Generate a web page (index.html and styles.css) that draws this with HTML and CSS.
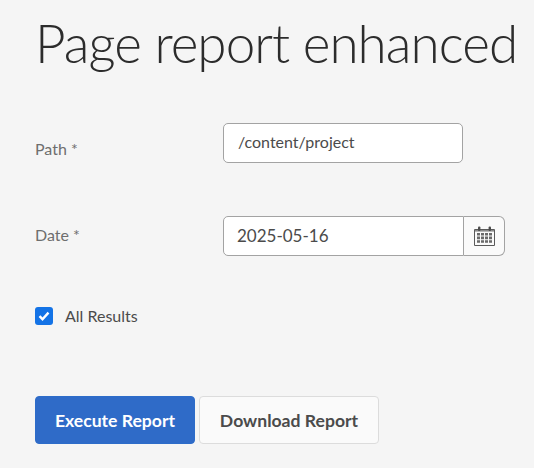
FILE: index.html
```html
<!DOCTYPE html>
<html lang="en">
<head>
    <meta charset="UTF-8">
    <meta name="viewport" content="width=device-width, initial-scale=1.0">
    <title>Page report enhanced</title>
    <link rel="stylesheet" href="styles.css">
</head>
<body>
    <h1 class="title">Page report enhanced</h1>
    <form class="report-form">
        <div class="row row-path">
            <label class="label" for="path">Path *</label>
            <input class="input input-path" id="path" type="text" value="/content/project">
        </div>
        <div class="row row-date">
            <label class="label" for="date">Date *</label>
            <div class="datepicker">
                <input class="input input-date" id="date" type="text" value="2025-05-16">
                <button class="calendar-button" type="button" aria-label="Calendar">
                    <svg width="21" height="21" viewBox="0 0 21 21">
                        <path d="M.5 3.5h20v16H.5z" fill="none" stroke="#5a5a5a"/>
                        <path d="M1 4h19v1.6H1z" fill="#8a8a8a"/>
                        <rect x="4" y="0.5" width="2.4" height="4.5" rx="1" fill="#4b4b4b"/>
                        <rect x="14.6" y="0.5" width="2.4" height="4.5" rx="1" fill="#4b4b4b"/>
                        <path d="M3 7h3v2.6H3zM7 7h3v2.6H7zM11 7h3v2.6h-3zM15 7h3v2.6h-3zM3 10.6h3v2.6H3zM7 10.6h3v2.6H7zM11 10.6h3v2.6h-3zM15 10.6h3v2.6h-3zM3 14.2h3v2.6H3zM7 14.2h3v2.6H7zM11 14.2h3v2.6h-3zM15 14.2h3v2.6h-3z" fill="#6a6a6a"/>
                    </svg>
                </button>
            </div>
        </div>
        <label class="checkbox-row">
            <span class="checkbox">
                <svg width="12" height="10" viewBox="0 0 12 10">
                    <path d="M1.5 5.2l3 3L10.5 1.6" fill="none" stroke="#fff" stroke-width="2.4"/>
                </svg>
            </span>
            <span class="checkbox-label">All Results</span>
        </label>
        <div class="actions">
            <button class="btn btn-primary" type="button">Execute Report</button>
            <button class="btn btn-secondary" type="button">Download Report</button>
        </div>
    </form>
</body>
</html>
```

FILE: styles.css
```css
body {
    margin: 0;
    padding: 0 0 0 35px;
    background-color: #f5f5f5;
    font-family: Lato, "Noto Sans", sans-serif;
    color: #4b4b4b;
    overflow: hidden;
}
.title {
    margin: 0;
    padding-top: 6px;
    height: 74px;
    font-size: 53px;
    line-height: 74px;
    font-weight: 300;
    letter-spacing: -0.95px;
    color: #2c2c2c;
    white-space: nowrap;
}
.report-form {
    display: flex;
    flex-direction: column;
}
.row {
    display: flex;
    align-items: center;
}
.row-path {
    margin-top: 43px;
}
.row-date {
    margin-top: 53px;
}
.label {
    width: 188px;
    font-size: 16px;
    color: #6e6e6e;
    position: relative;
    top: 5px;
}
.row-date .label {
    top: -2px;
}
.input {
    height: 40px;
    box-sizing: border-box;
    border: 1px solid #a3a3a3;
    border-radius: 5px;
    background-color: #fff;
    font-family: inherit;
    font-size: 16px;
    color: #4b4b4b;
    outline: none;
}
.input-path {
    width: 240px;
    padding: 0 14px 4px;
}
.datepicker {
    display: flex;
}
.input-date {
    width: 241px;
    padding: 0 13px 2px;
    border-radius: 5px 0 0 5px;
    font-size: 17px;
}
.calendar-button {
    width: 41px;
    height: 40px;
    padding: 0;
    box-sizing: border-box;
    display: flex;
    align-items: center;
    justify-content: center;
    border: 1px solid #a3a3a3;
    border-left: 0;
    border-radius: 0 6px 6px 0;
    background-color: #fafafa;
}
.checkbox-row {
    display: flex;
    align-items: center;
    margin-top: 50px;
}
.checkbox {
    width: 18px;
    height: 18px;
    border-radius: 3px;
    background-color: #1473e6;
    display: flex;
    align-items: center;
    justify-content: center;
}
.checkbox-label {
    margin-left: 12px;
    font-size: 16px;
}
.actions {
    display: flex;
    gap: 4px;
    margin-top: 71px;
}
.btn {
    height: 48px;
    box-sizing: border-box;
    border-radius: 4px;
    font-family: inherit;
    font-size: 17.6px;
    font-weight: 700;
}
.btn-primary {
    width: 160px;
    border: 1px solid #2d6cc9;
    background-color: #2f6bc8;
    color: #fff;
}
.btn-secondary {
    width: 180px;
    border: 1px solid #dcdcdc;
    background-color: #fafafa;
    color: #4b4b4b;
}
```
